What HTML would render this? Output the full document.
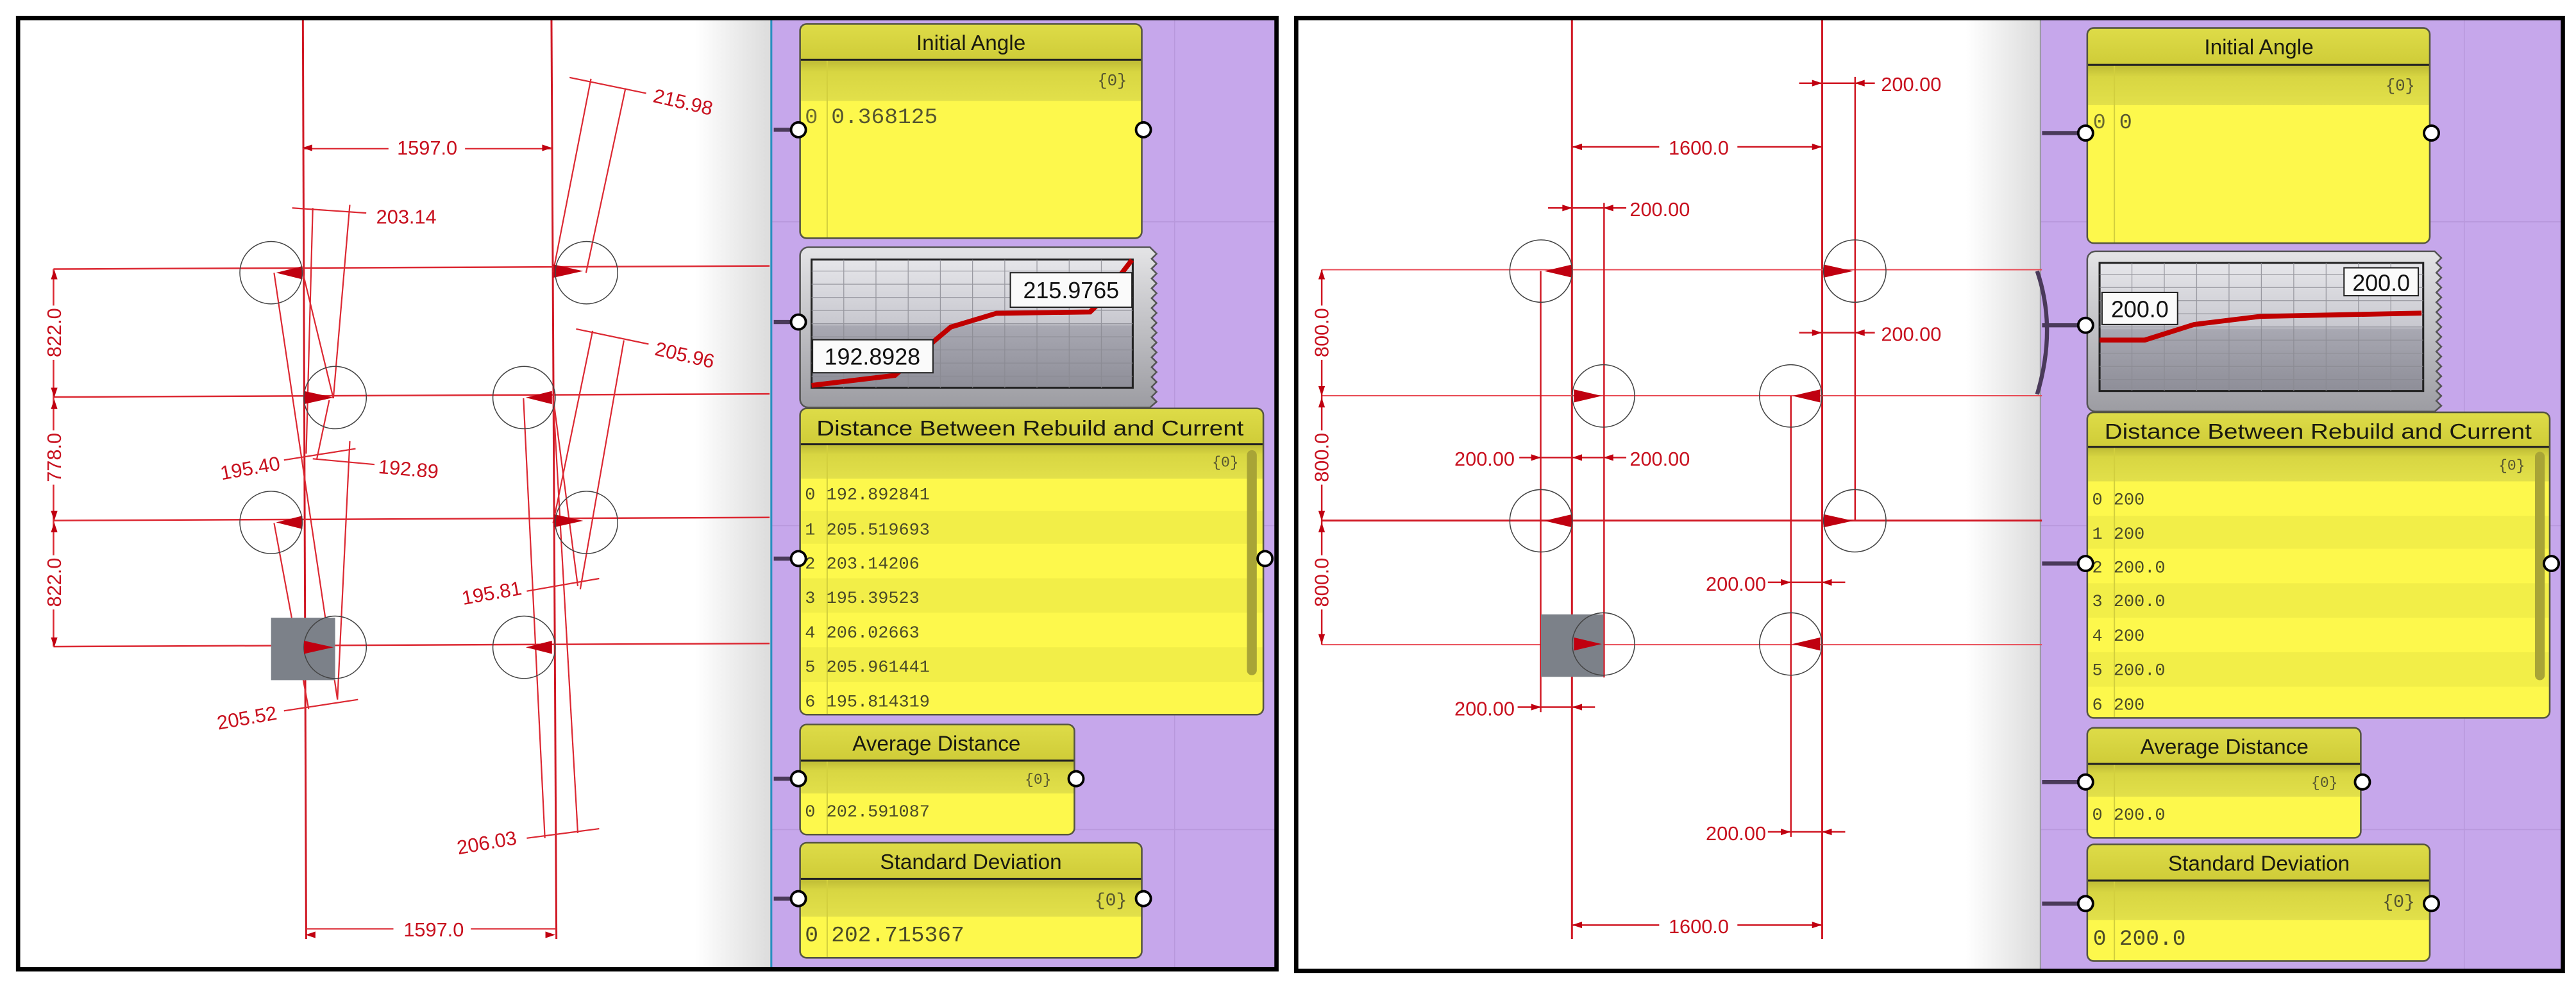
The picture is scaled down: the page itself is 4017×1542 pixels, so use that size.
<!DOCTYPE html>
<html><head><meta charset="utf-8"><style>
html,body{margin:0;padding:0;background:#fff;}
svg{display:block}
.t{font-family:"Liberation Sans",sans-serif;}
.m{font-family:"Liberation Mono",monospace;}
.d{font-family:"Liberation Sans",sans-serif;font-size:12px;fill:#c8101e;}
</style></head><body>
<svg width="4017" height="1542" viewBox="0 0 1568 602" preserveAspectRatio="none" xmlns="http://www.w3.org/2000/svg">
<defs>
<linearGradient id="cv" x1="0" x2="1" y1="0" y2="0">
<stop offset="0" stop-color="#ffffff"/><stop offset="0.9" stop-color="#ffffff"/><stop offset="1" stop-color="#dcdcdc"/>
</linearGradient>
<linearGradient id="gOut" x1="0" x2="0" y1="0" y2="1">
<stop offset="0" stop-color="#e4e4e6"/><stop offset="1" stop-color="#9c9ca2"/>
</linearGradient>
<linearGradient id="gIn" x1="0" x2="0" y1="0" y2="1">
<stop offset="0" stop-color="#e6e6ea"/><stop offset="0.5" stop-color="#c8c8cf"/><stop offset="0.52" stop-color="#a8a8b2"/><stop offset="1" stop-color="#8e8e98"/>
</linearGradient>
<linearGradient id="hdr" x1="0" x2="0" y1="0" y2="1">
<stop offset="0" stop-color="#dedc48"/><stop offset="1" stop-color="#cfcc38"/>
</linearGradient>
<linearGradient id="sub" x1="0" x2="0" y1="0" y2="1">
<stop offset="0" stop-color="#bcb934"/><stop offset="0.3" stop-color="#d8d642"/><stop offset="1" stop-color="#e2e04a"/>
</linearGradient>
</defs>

<rect x="0" y="0" width="1568" height="602" fill="#fff"/>

<!-- ============ LEFT PANEL ============ -->
<rect x="11" y="11" width="458" height="579" fill="url(#cv)"/>
<rect x="469" y="11" width="308" height="579" fill="#c6a7eb"/>
<g stroke="#b898dc" stroke-width="0.6">
<line x1="469" y1="135" x2="777" y2="135"/><line x1="469" y1="320" x2="777" y2="320"/><line x1="469" y1="505" x2="777" y2="505"/>
<line x1="715" y1="11" x2="715" y2="590"/>
</g>
<line x1="469.5" y1="11" x2="469.5" y2="590" stroke="#2a8fc0" stroke-width="1.2"/>

<g transform="scale(0.501 0.3836)" fill="none" stroke="#d01824">
<line x1="368" y1="30" x2="372" y2="1490" stroke-width="3" vector-effect="non-scaling-stroke"/>
<line x1="670" y1="30" x2="676" y2="1490" stroke-width="3" vector-effect="non-scaling-stroke"/>
<g stroke="#dc2832">
<line x1="65" y1="427" x2="935" y2="422" stroke-width="2.5" vector-effect="non-scaling-stroke"/>
<line x1="65" y1="630" x2="935" y2="625" stroke-width="2.5" vector-effect="non-scaling-stroke"/>
<line x1="65" y1="826" x2="935" y2="821" stroke-width="2.5" vector-effect="non-scaling-stroke"/>
<line x1="65" y1="1026" x2="935" y2="1021" stroke-width="2.5" vector-effect="non-scaling-stroke"/>
<line x1="65" y1="427" x2="65" y2="1026" stroke-width="2.5" vector-effect="non-scaling-stroke"/>
<line x1="333" y1="433" x2="410" y2="1110" stroke-width="2.2" vector-effect="non-scaling-stroke"/>
<line x1="368" y1="433" x2="405" y2="632" stroke-width="2.2" vector-effect="non-scaling-stroke"/>
<line x1="405" y1="632" x2="425" y2="325" stroke-width="2.2" vector-effect="non-scaling-stroke"/>
<line x1="333" y1="830" x2="375" y2="1125" stroke-width="2.2" vector-effect="non-scaling-stroke"/>
<line x1="425" y1="700" x2="410" y2="1110" stroke-width="2.2" vector-effect="non-scaling-stroke"/>
<line x1="380" y1="330" x2="372" y2="720" stroke-width="2.2" vector-effect="non-scaling-stroke"/>
<line x1="400" y1="635" x2="385" y2="728" stroke-width="2.2" vector-effect="non-scaling-stroke"/>
<line x1="355" y1="330" x2="445" y2="338" stroke-width="2.2" vector-effect="non-scaling-stroke"/>
<line x1="345" y1="730" x2="432" y2="712" stroke-width="2.2" vector-effect="non-scaling-stroke"/>
<line x1="380" y1="728" x2="455" y2="737" stroke-width="2.2" vector-effect="non-scaling-stroke"/>
<line x1="345" y1="1128" x2="435" y2="1110" stroke-width="2.2" vector-effect="non-scaling-stroke"/>
<line x1="672" y1="432" x2="718" y2="125" stroke-width="2.2" vector-effect="non-scaling-stroke"/>
<line x1="712" y1="433" x2="760" y2="140" stroke-width="2.2" vector-effect="non-scaling-stroke"/>
<line x1="692" y1="123" x2="785" y2="148" stroke-width="2.2" vector-effect="non-scaling-stroke"/>
<line x1="636" y1="632" x2="662" y2="1330" stroke-width="2.2" vector-effect="non-scaling-stroke"/>
<line x1="672" y1="630" x2="702" y2="1322" stroke-width="2.2" vector-effect="non-scaling-stroke"/>
<line x1="672" y1="830" x2="720" y2="525" stroke-width="2.2" vector-effect="non-scaling-stroke"/>
<line x1="705" y1="935" x2="758" y2="540" stroke-width="2.2" vector-effect="non-scaling-stroke"/>
<line x1="700" y1="522" x2="788" y2="546" stroke-width="2.2" vector-effect="non-scaling-stroke"/>
<line x1="672" y1="630" x2="702" y2="930" stroke-width="2.2" vector-effect="non-scaling-stroke"/>
<line x1="640" y1="938" x2="728" y2="918" stroke-width="2.2" vector-effect="non-scaling-stroke"/>
<line x1="640" y1="1330" x2="728" y2="1315" stroke-width="2.2" vector-effect="non-scaling-stroke"/>
<line x1="368" y1="236" x2="472" y2="236" stroke-width="2.2" vector-effect="non-scaling-stroke"/>
<line x1="565" y1="236" x2="670" y2="236" stroke-width="2.2" vector-effect="non-scaling-stroke"/>
<line x1="372" y1="1474" x2="478" y2="1474" stroke-width="2.2" vector-effect="non-scaling-stroke"/>
<line x1="572" y1="1474" x2="676" y2="1474" stroke-width="2.2" vector-effect="non-scaling-stroke"/>
</g>
</g>
<g fill="#c00010">
<path d="M184,90 l6,-2 v4z M336,90 l-6,-2 v4z M186,569 l6,-2 v4z M338,569 l-6,-2 v4z"/>
<path d="M33,164 l-2,6 h4z M33,242 l-2,-6 h4z M33,243 l-2,6 h4z M33,317 l-2,-6 h4z M33,318 l-2,6 h4z M33,394 l-2,-6 h4z"/>
<path d="M168,166 L184,162 L184,170z"/>
<path d="M203,242 L185,238 L185,246z"/>
<path d="M168,318 L184,314 L184,322z"/>
<path d="M355,165 L337,161 L337,169z"/>
<path d="M320,242 L336,238 L336,246z"/>
<path d="M355,317 L337,313 L337,321z"/>
<path d="M320,394 L336,390 L336,398z"/>
</g>
<rect x="165" y="376" width="39" height="38" fill="#7c8189"/>
<g fill="none" stroke="#444" stroke-width="0.6">
<circle cx="165" cy="166" r="19"/><circle cx="204" cy="242" r="19"/><circle cx="165" cy="318" r="19"/><circle cx="204" cy="394" r="19"/>
<circle cx="357" cy="166" r="19"/><circle cx="319" cy="242" r="19"/><circle cx="357" cy="318" r="19"/><circle cx="319" cy="394" r="19"/>
</g>
<path d="M203,394 L185,390 L185,398z" fill="#c00010"/>
<text class="d" x="260" y="94" text-anchor="middle">1597.0</text>
<text class="d" x="264" y="570" text-anchor="middle">1597.0</text>
<text class="d" x="229" y="136">203.14</text>
<text class="d" x="230" y="288" transform="rotate(5 230 288)">192.89</text>
<text class="d" x="397" y="62" transform="rotate(13 397 62)">215.98</text>
<text class="d" x="398" y="216" transform="rotate(13 398 216)">205.96</text>
<text class="d" x="153" y="289" text-anchor="middle" transform="rotate(-10 153 289)">195.40</text>
<text class="d" x="300" y="365" text-anchor="middle" transform="rotate(-10 300 365)">195.81</text>
<text class="d" x="151" y="441" text-anchor="middle" transform="rotate(-10 151 441)">205.52</text>
<text class="d" x="297" y="517" text-anchor="middle" transform="rotate(-10 297 517)">206.03</text>
<g>
<rect x="27" y="186" width="12" height="33" fill="#fff"/><text class="d" transform="translate(37 202.5) rotate(-90)" text-anchor="middle">822.0</text>
<rect x="27" y="262" width="12" height="33" fill="#fff"/><text class="d" transform="translate(37 278.5) rotate(-90)" text-anchor="middle">778.0</text>
<rect x="27" y="338" width="12" height="33" fill="#fff"/><text class="d" transform="translate(37 354.5) rotate(-90)" text-anchor="middle">822.0</text>
</g>

<g stroke="#4a3a5a" stroke-width="2.5">
<line x1="471" y1="79" x2="485" y2="79"/><line x1="471" y1="196" x2="485" y2="196"/>
<line x1="471" y1="340" x2="485" y2="340"/><line x1="471" y1="474" x2="485" y2="474"/><line x1="471" y1="547" x2="485" y2="547"/>
</g>

<g>
<rect x="487" y="14.6" width="208" height="130.4" rx="4" fill="#fdf84c"/>
<path d="M487,36.4 V18.6 a4,4 0 0 1 4,-4 H691 a4,4 0 0 1 4,4 V36.4z" fill="url(#hdr)"/>
<rect x="487" y="36.4" width="208" height="25" fill="url(#sub)"/>
<line x1="503.5" y1="36.4" x2="503.5" y2="145" stroke="#d2cf3e" stroke-width="0.8"/>
<line x1="487" y1="36.4" x2="695" y2="36.4" stroke="#222" stroke-width="1.2"/>
<rect x="487" y="14.6" width="208" height="130.4" rx="4" fill="none" stroke="#555540" stroke-width="1"/>
<text class="t" x="591" y="30.5" font-size="13" text-anchor="middle" fill="#1a1a10">Initial Angle</text>
<text class="m" x="686" y="52" font-size="10" text-anchor="end" fill="#555530">{0}</text>
<text class="m" x="490" y="75" font-size="13" fill="#6a6a30">0</text>
<text class="m" x="506" y="75" font-size="13.5" fill="#555530">0.368125</text>
<circle cx="486" cy="79" r="4.5" fill="#fff" stroke="#000" stroke-width="1.5"/>
<circle cx="696" cy="79" r="4.5" fill="#fff" stroke="#000" stroke-width="1.5"/>
</g>

<g>
<path d="M492,150.5 H700 l4,4 l-3,3 l3,3 l-3,3 l3,3 l-3,3 l3,3 l-3,3 l3,3 l-3,3 l3,3 l-3,3 l3,3 l-3,3 l3,3 l-3,3 l3,3 l-3,3 l3,3 l-3,3 l3,3 l-3,3 l3,3 l-3,3 l3,3 l-3,3 l3,3 l-3,3 l3,3 l-3,3 l3,3 l-4,3.5 H492 a5,5 0 0 1 -5,-5 V155.5 a5,5 0 0 1 5,-5z" fill="url(#gOut)" stroke="#555" stroke-width="1"/>
<rect x="494" y="158" width="195.5" height="78" fill="url(#gIn)" stroke="#222" stroke-width="1.2"/>
<g stroke="#8a8a92" stroke-width="0.5" opacity="0.8">
<line x1="513.6" y1="158" x2="513.6" y2="236"/><line x1="533.2" y1="158" x2="533.2" y2="236"/><line x1="552.8" y1="158" x2="552.8" y2="236"/><line x1="572.4" y1="158" x2="572.4" y2="236"/><line x1="592" y1="158" x2="592" y2="236"/><line x1="611.6" y1="158" x2="611.6" y2="236"/><line x1="631.2" y1="158" x2="631.2" y2="236"/><line x1="650.8" y1="158" x2="650.8" y2="236"/><line x1="670.4" y1="158" x2="670.4" y2="236"/>
<line x1="494" y1="165" x2="689.5" y2="165"/><line x1="494" y1="173" x2="689.5" y2="173"/><line x1="494" y1="181" x2="689.5" y2="181"/><line x1="494" y1="189" x2="689.5" y2="189"/><line x1="494" y1="197" x2="689.5" y2="197"/><line x1="494" y1="205" x2="689.5" y2="205"/><line x1="494" y1="213" x2="689.5" y2="213"/><line x1="494" y1="221" x2="689.5" y2="221"/><line x1="494" y1="229" x2="689.5" y2="229"/>
</g>
<polyline points="494,234.6 544.7,228.5 569.4,206.9 578.7,199.1 606.5,190.7 663.5,189.9 668.2,185.3 689,158.2" fill="none" stroke="#c00000" stroke-width="3"/>
<rect x="494.6" y="206.8" width="73.3" height="20.1" fill="#fafafa" stroke="#222" stroke-width="0.8"/>
<text class="t" x="531" y="222" font-size="14" text-anchor="middle" fill="#111">192.8928</text>
<rect x="615" y="166" width="74" height="21" fill="#fafafa" stroke="#222" stroke-width="0.8"/>
<text class="t" x="652" y="181.5" font-size="14" text-anchor="middle" fill="#111">215.9765</text>
<circle cx="486" cy="196" r="4.5" fill="#fff" stroke="#000" stroke-width="1.5"/>
</g>

<g>
<rect x="487" y="248.6" width="282" height="186.4" rx="4" fill="#fdf84c"/>
<path d="M487,270.4 V252.6 a4,4 0 0 1 4,-4 H765 a4,4 0 0 1 4,4 V270.4z" fill="url(#hdr)"/>
<rect x="487" y="270.4" width="282" height="21" fill="url(#sub)"/>
<g fill="#f2ee48"><rect x="487" y="311" width="282" height="20"/><rect x="487" y="352" width="282" height="21"/><rect x="487" y="394" width="282" height="21"/></g>
<line x1="503.5" y1="270.4" x2="503.5" y2="435" stroke="#d2cf3e" stroke-width="0.8"/>
<rect x="759" y="274" width="6" height="137" rx="3" fill="#a8a436"/>
<line x1="487" y1="270.4" x2="769" y2="270.4" stroke="#222" stroke-width="1.2"/>
<rect x="487" y="248.6" width="282" height="186.4" rx="4" fill="none" stroke="#555540" stroke-width="1"/>
<text class="t" x="627" y="265" font-size="13" text-anchor="middle" fill="#1a1a10" textLength="260" lengthAdjust="spacingAndGlyphs">Distance Between Rebuild and Current</text>
<text class="m" x="754" y="284" font-size="9" text-anchor="end" fill="#555530">{0}</text>
<g class="m" font-size="10.5" fill="#4a4a28">
<text x="490" y="304">0</text><text x="503" y="304">192.892841</text>
<text x="490" y="325.5">1</text><text x="503" y="325.5">205.519693</text>
<text x="490" y="346">2</text><text x="503" y="346">203.14206</text>
<text x="490" y="367">3</text><text x="503" y="367">195.39523</text>
<text x="490" y="388">4</text><text x="503" y="388">206.02663</text>
<text x="490" y="409">5</text><text x="503" y="409">205.961441</text>
<text x="490" y="430">6</text><text x="503" y="430">195.814319</text>
</g>
<circle cx="486" cy="340" r="4.5" fill="#fff" stroke="#000" stroke-width="1.5"/>
<circle cx="770" cy="340" r="4.5" fill="#fff" stroke="#000" stroke-width="1.5"/>
</g>

<g>
<rect x="487" y="441" width="167" height="67" rx="4" fill="#fdf84c"/>
<path d="M487,463 V445 a4,4 0 0 1 4,-4 H650 a4,4 0 0 1 4,4 V463z" fill="url(#hdr)"/>
<rect x="487" y="463" width="167" height="20" fill="url(#sub)"/>
<line x1="503.5" y1="463" x2="503.5" y2="508" stroke="#d2cf3e" stroke-width="0.8"/>
<line x1="487" y1="463" x2="654" y2="463" stroke="#222" stroke-width="1.2"/>
<rect x="487" y="441" width="167" height="67" rx="4" fill="none" stroke="#555540" stroke-width="1"/>
<text class="t" x="570" y="457" font-size="13" text-anchor="middle" fill="#1a1a10">Average Distance</text>
<text class="m" x="640" y="477" font-size="9" text-anchor="end" fill="#555530">{0}</text>
<text class="m" x="490" y="497" font-size="10.5" fill="#4a4a28">0</text>
<text class="m" x="503" y="497" font-size="10.5" fill="#4a4a28">202.591087</text>
<circle cx="486" cy="474" r="4.5" fill="#fff" stroke="#000" stroke-width="1.5"/>
<circle cx="655" cy="474" r="4.5" fill="#fff" stroke="#000" stroke-width="1.5"/>
</g>

<g>
<rect x="487" y="513" width="208" height="70" rx="4" fill="#fdf84c"/>
<path d="M487,535 V517 a4,4 0 0 1 4,-4 H691 a4,4 0 0 1 4,4 V535z" fill="url(#hdr)"/>
<rect x="487" y="535" width="208" height="23" fill="url(#sub)"/>
<line x1="503.5" y1="535" x2="503.5" y2="583" stroke="#d2cf3e" stroke-width="0.8"/>
<line x1="487" y1="535" x2="695" y2="535" stroke="#222" stroke-width="1.2"/>
<rect x="487" y="513" width="208" height="70" rx="4" fill="none" stroke="#555540" stroke-width="1"/>
<text class="t" x="591" y="529" font-size="13" text-anchor="middle" fill="#1a1a10">Standard Deviation</text>
<text class="m" x="686" y="551" font-size="11" text-anchor="end" fill="#555530">{0}</text>
<text class="m" x="490" y="573" font-size="13.5" fill="#4a4a28">0</text>
<text class="m" x="506" y="573" font-size="13.5" fill="#4a4a28">202.715367</text>
<circle cx="486" cy="547" r="4.5" fill="#fff" stroke="#000" stroke-width="1.5"/>
<circle cx="696" cy="547" r="4.5" fill="#fff" stroke="#000" stroke-width="1.5"/>
</g>

<rect x="11" y="11" width="766" height="579" fill="none" stroke="#000" stroke-width="2.6"/>

<!-- ============ RIGHT PANEL ============ -->
<rect x="789" y="11" width="453" height="580" fill="url(#cv)"/>
<rect x="1242" y="11" width="318" height="580" fill="#c6a7eb"/>
<g stroke="#b898dc" stroke-width="0.6">
<line x1="1242" y1="135" x2="1560" y2="135"/><line x1="1242" y1="320" x2="1560" y2="320"/><line x1="1242" y1="505" x2="1560" y2="505"/>
<line x1="1500" y1="11" x2="1500" y2="591"/>
</g>
<line x1="1242" y1="11" x2="1242" y2="591" stroke="#9a9aa2" stroke-width="0.8"/>

<g transform="translate(784.5 0) scale(0.501 0.3836)" fill="none">
<g stroke="#d01824">
<line x1="344" y1="30" x2="344" y2="1490" stroke-width="3" vector-effect="non-scaling-stroke"/>
<line x1="648" y1="30" x2="648" y2="1490" stroke-width="3" vector-effect="non-scaling-stroke"/>
<line x1="40" y1="826" x2="915" y2="826" stroke-width="3" vector-effect="non-scaling-stroke"/>
</g>
<g stroke="#e84a54">
<line x1="40" y1="428" x2="915" y2="428" stroke-width="2" vector-effect="non-scaling-stroke"/>
<line x1="40" y1="628" x2="915" y2="628" stroke-width="2" vector-effect="non-scaling-stroke"/>
<line x1="40" y1="1023" x2="915" y2="1023" stroke-width="2" vector-effect="non-scaling-stroke"/>
</g>
<g stroke="#d01824">
<line x1="40" y1="428" x2="40" y2="1023" stroke-width="2.5" vector-effect="non-scaling-stroke"/>
<line x1="306" y1="430" x2="306" y2="1130" stroke-width="2.5" vector-effect="non-scaling-stroke"/>
<line x1="383" y1="322" x2="383" y2="1075" stroke-width="2.5" vector-effect="non-scaling-stroke"/>
<line x1="688" y1="122" x2="688" y2="826" stroke-width="2.5" vector-effect="non-scaling-stroke"/>
<line x1="610" y1="628" x2="610" y2="1328" stroke-width="2.5" vector-effect="non-scaling-stroke"/>
<line x1="620" y1="132" x2="712" y2="132" stroke-width="2.5" vector-effect="non-scaling-stroke"/>
<line x1="620" y1="528" x2="712" y2="528" stroke-width="2.5" vector-effect="non-scaling-stroke"/>
<line x1="344" y1="233" x2="450" y2="233" stroke-width="2.5" vector-effect="non-scaling-stroke"/>
<line x1="545" y1="233" x2="648" y2="233" stroke-width="2.5" vector-effect="non-scaling-stroke"/>
<line x1="344" y1="1468" x2="450" y2="1468" stroke-width="2.5" vector-effect="non-scaling-stroke"/>
<line x1="545" y1="1468" x2="648" y2="1468" stroke-width="2.5" vector-effect="non-scaling-stroke"/>
<line x1="315" y1="330" x2="410" y2="330" stroke-width="2.5" vector-effect="non-scaling-stroke"/>
<line x1="280" y1="726" x2="410" y2="726" stroke-width="2.5" vector-effect="non-scaling-stroke"/>
<line x1="582" y1="924" x2="676" y2="924" stroke-width="2.5" vector-effect="non-scaling-stroke"/>
<line x1="278" y1="1122" x2="372" y2="1122" stroke-width="2.5" vector-effect="non-scaling-stroke"/>
<line x1="582" y1="1320" x2="676" y2="1320" stroke-width="2.5" vector-effect="non-scaling-stroke"/>
</g>
</g>
<g fill="#c00010">
<path d="M957,89.4 l6,-2 v4z M1109,89.4 l-6,-2 v4z M957,563 l6,-2 v4z M1109,563 l-6,-2 v4z"/>
<path d="M1109,50.6 l-6,-2 v4z M1129,50.6 l6,-2 v4z M1109,202.5 l-6,-2 v4z M1129,202.5 l6,-2 v4z"/>
<path d="M957,126.6 l-6,-2 v4z M976,126.6 l6,-2 v4z"/>
<path d="M938,278.5 l-6,-2 v4z M957,278.5 l6,-2 v4z M976,278.5 l6,-2 v4z"/>
<path d="M1090,354.5 l-6,-2 v4z M1109,354.5 l6,-2 v4z M1090,506.4 l-6,-2 v4z M1109,506.4 l6,-2 v4z"/>
<path d="M938,430.4 l-6,-2 v4z M957,430.4 l6,-2 v4z"/>
<path d="M804.5,164 l-2,6 h4z M804.5,241 l-2,-6 h4z M804.5,242 l-2,6 h4z M804.5,317 l-2,-6 h4z M804.5,318 l-2,6 h4z M804.5,392 l-2,-6 h4z"/>
</g>
<rect x="938" y="374" width="38" height="38" fill="#7c8189"/>
<g fill="#c00010">
<path d="M940,165 L957,161 L957,169z"/>
<path d="M975,241 L958,237 L958,245z"/>
<path d="M940,317 L957,313 L957,321z"/>
<path d="M975,392 L958,388 L958,396z"/>
<path d="M1128,165 L1110,161 L1110,169z"/>
<path d="M1091,241 L1108,237 L1108,245z"/>
<path d="M1128,317 L1110,313 L1110,321z"/>
<path d="M1091,392 L1108,388 L1108,396z"/>
</g>
<g fill="none" stroke="#444" stroke-width="0.6">
<circle cx="938" cy="165" r="19"/><circle cx="976" cy="241" r="19"/><circle cx="938" cy="317" r="19"/><circle cx="976" cy="392" r="19"/>
<circle cx="1129" cy="165" r="19"/><circle cx="1090" cy="241" r="19"/><circle cx="1129" cy="317" r="19"/><circle cx="1090" cy="392" r="19"/>
</g>
<text class="d" x="1145" y="55.5">200.00</text>
<text class="d" x="1034" y="94" text-anchor="middle">1600.0</text>
<text class="d" x="992" y="131.5">200.00</text>
<text class="d" x="1145" y="207.5">200.00</text>
<text class="d" x="922" y="283.5" text-anchor="end">200.00</text>
<text class="d" x="992" y="283.5">200.00</text>
<text class="d" x="1075" y="359.5" text-anchor="end">200.00</text>
<text class="d" x="922" y="435.5" text-anchor="end">200.00</text>
<text class="d" x="1075" y="511.5" text-anchor="end">200.00</text>
<text class="d" x="1034" y="568" text-anchor="middle">1600.0</text>
<g>
<rect x="798.5" y="186" width="12" height="33" fill="#fff"/><text class="d" transform="translate(808.5 202.5) rotate(-90)" text-anchor="middle">800.0</text>
<rect x="798.5" y="262" width="12" height="33" fill="#fff"/><text class="d" transform="translate(808.5 278.5) rotate(-90)" text-anchor="middle">800.0</text>
<rect x="798.5" y="338" width="12" height="33" fill="#fff"/><text class="d" transform="translate(808.5 354.5) rotate(-90)" text-anchor="middle">800.0</text>
</g>

<path d="M1240,165 Q1252,200 1240,240" fill="none" stroke="#4a3a5a" stroke-width="2.5"/>
<g stroke="#4a3a5a" stroke-width="2.5">
<line x1="1243" y1="81" x2="1268" y2="81"/><line x1="1243" y1="198" x2="1268" y2="198"/>
<line x1="1243" y1="343" x2="1268" y2="343"/><line x1="1243" y1="476" x2="1268" y2="476"/><line x1="1243" y1="550" x2="1268" y2="550"/>
</g>

<g>
<rect x="1270.5" y="17" width="208.5" height="131" rx="4" fill="#fdf84c"/>
<path d="M1270.5,39.5 V21 a4,4 0 0 1 4,-4 H1475 a4,4 0 0 1 4,4 V39.5z" fill="url(#hdr)"/>
<rect x="1270.5" y="39.5" width="208.5" height="24.5" fill="url(#sub)"/>
<line x1="1287" y1="39.5" x2="1287" y2="148" stroke="#d2cf3e" stroke-width="0.8"/>
<line x1="1270.5" y1="39.5" x2="1479" y2="39.5" stroke="#222" stroke-width="1.2"/>
<rect x="1270.5" y="17" width="208.5" height="131" rx="4" fill="none" stroke="#555540" stroke-width="1"/>
<text class="t" x="1375" y="33" font-size="13" text-anchor="middle" fill="#1a1a10">Initial Angle</text>
<text class="m" x="1470" y="55" font-size="10" text-anchor="end" fill="#555530">{0}</text>
<text class="m" x="1274" y="78" font-size="13" fill="#6a6a30">0</text>
<text class="m" x="1290" y="78" font-size="13" fill="#555530">0</text>
<circle cx="1269.5" cy="81" r="4.5" fill="#fff" stroke="#000" stroke-width="1.5"/>
<circle cx="1480" cy="81" r="4.5" fill="#fff" stroke="#000" stroke-width="1.5"/>
</g>

<g>
<path d="M1275.5,153 H1482 l4,4 l-3,3 l3,3 l-3,3 l3,3 l-3,3 l3,3 l-3,3 l3,3 l-3,3 l3,3 l-3,3 l3,3 l-3,3 l3,3 l-3,3 l3,3 l-3,3 l3,3 l-3,3 l3,3 l-3,3 l3,3 l-3,3 l3,3 l-3,3 l3,3 l-3,3 l3,3 l-3,3 l3,3 l-4,3.5 H1275.5 a5,5 0 0 1 -5,-5 V158 a5,5 0 0 1 5,-5z" fill="url(#gOut)" stroke="#555" stroke-width="1"/>
<rect x="1278" y="160" width="197" height="78" fill="url(#gIn)" stroke="#222" stroke-width="1.2"/>
<g stroke="#8a8a92" stroke-width="0.5" opacity="0.8">
<line x1="1297.7" y1="160" x2="1297.7" y2="238"/><line x1="1317.4" y1="160" x2="1317.4" y2="238"/><line x1="1337.1" y1="160" x2="1337.1" y2="238"/><line x1="1356.8" y1="160" x2="1356.8" y2="238"/><line x1="1376.5" y1="160" x2="1376.5" y2="238"/><line x1="1396.2" y1="160" x2="1396.2" y2="238"/><line x1="1415.9" y1="160" x2="1415.9" y2="238"/><line x1="1435.6" y1="160" x2="1435.6" y2="238"/><line x1="1455.3" y1="160" x2="1455.3" y2="238"/>
<line x1="1278" y1="167" x2="1475" y2="167"/><line x1="1278" y1="175" x2="1475" y2="175"/><line x1="1278" y1="183" x2="1475" y2="183"/><line x1="1278" y1="191" x2="1475" y2="191"/><line x1="1278" y1="199" x2="1475" y2="199"/><line x1="1278" y1="207" x2="1475" y2="207"/><line x1="1278" y1="215" x2="1475" y2="215"/><line x1="1278" y1="223" x2="1475" y2="223"/><line x1="1278" y1="231" x2="1475" y2="231"/>
</g>
<polyline points="1278,207 1305.5,207 1335.6,197.5 1375.7,192.6 1474,190.6" fill="none" stroke="#c00000" stroke-width="3"/>
<rect x="1279.5" y="178" width="46" height="19.5" fill="#fafafa" stroke="#222" stroke-width="0.8"/>
<text class="t" x="1302.5" y="193" font-size="14" text-anchor="middle" fill="#111">200.0</text>
<rect x="1426.8" y="163" width="45.2" height="17" fill="#fafafa" stroke="#222" stroke-width="0.8"/>
<text class="t" x="1449.4" y="177" font-size="14" text-anchor="middle" fill="#111">200.0</text>
<circle cx="1269.5" cy="198" r="4.5" fill="#fff" stroke="#000" stroke-width="1.5"/>
</g>

<g>
<rect x="1270.5" y="251" width="281.5" height="186" rx="4" fill="#fdf84c"/>
<path d="M1270.5,272 V255 a4,4 0 0 1 4,-4 H1548 a4,4 0 0 1 4,4 V272z" fill="url(#hdr)"/>
<rect x="1270.5" y="272" width="281.5" height="21" fill="url(#sub)"/>
<g fill="#f2ee48"><rect x="1270.5" y="314" width="281.5" height="20"/><rect x="1270.5" y="355" width="281.5" height="21"/><rect x="1270.5" y="397" width="281.5" height="21"/></g>
<line x1="1287" y1="272" x2="1287" y2="437" stroke="#d2cf3e" stroke-width="0.8"/>
<rect x="1543" y="275" width="6" height="139" rx="3" fill="#a8a436"/>
<line x1="1270.5" y1="272" x2="1552" y2="272" stroke="#222" stroke-width="1.2"/>
<rect x="1270.5" y="251" width="281.5" height="186" rx="4" fill="none" stroke="#555540" stroke-width="1"/>
<text class="t" x="1411" y="267" font-size="13" text-anchor="middle" fill="#1a1a10" textLength="260" lengthAdjust="spacingAndGlyphs">Distance Between Rebuild and Current</text>
<text class="m" x="1537" y="286" font-size="9" text-anchor="end" fill="#555530">{0}</text>
<g class="m" font-size="10.5" fill="#4a4a28">
<text x="1273.5" y="307">0</text><text x="1286.5" y="307">200</text>
<text x="1273.5" y="328">1</text><text x="1286.5" y="328">200</text>
<text x="1273.5" y="348.5">2</text><text x="1286.5" y="348.5">200.0</text>
<text x="1273.5" y="369">3</text><text x="1286.5" y="369">200.0</text>
<text x="1273.5" y="390">4</text><text x="1286.5" y="390">200</text>
<text x="1273.5" y="411">5</text><text x="1286.5" y="411">200.0</text>
<text x="1273.5" y="432">6</text><text x="1286.5" y="432">200</text>
</g>
<circle cx="1269.5" cy="343" r="4.5" fill="#fff" stroke="#000" stroke-width="1.5"/>
<circle cx="1553" cy="343" r="4.5" fill="#fff" stroke="#000" stroke-width="1.5"/>
</g>

<g>
<rect x="1270.5" y="443" width="166.5" height="67" rx="4" fill="#fdf84c"/>
<path d="M1270.5,465 V447 a4,4 0 0 1 4,-4 H1433 a4,4 0 0 1 4,4 V465z" fill="url(#hdr)"/>
<rect x="1270.5" y="465" width="166.5" height="20" fill="url(#sub)"/>
<line x1="1287" y1="465" x2="1287" y2="510" stroke="#d2cf3e" stroke-width="0.8"/>
<line x1="1270.5" y1="465" x2="1437" y2="465" stroke="#222" stroke-width="1.2"/>
<rect x="1270.5" y="443" width="166.5" height="67" rx="4" fill="none" stroke="#555540" stroke-width="1"/>
<text class="t" x="1354" y="459" font-size="13" text-anchor="middle" fill="#1a1a10">Average Distance</text>
<text class="m" x="1423" y="479" font-size="9" text-anchor="end" fill="#555530">{0}</text>
<text class="m" x="1273.5" y="499" font-size="10.5" fill="#4a4a28">0</text>
<text class="m" x="1286.5" y="499" font-size="10.5" fill="#4a4a28">200.0</text>
<circle cx="1269.5" cy="476" r="4.5" fill="#fff" stroke="#000" stroke-width="1.5"/>
<circle cx="1438" cy="476" r="4.5" fill="#fff" stroke="#000" stroke-width="1.5"/>
</g>

<g>
<rect x="1270.5" y="514" width="208.5" height="71" rx="4" fill="#fdf84c"/>
<path d="M1270.5,536 V518 a4,4 0 0 1 4,-4 H1475 a4,4 0 0 1 4,4 V536z" fill="url(#hdr)"/>
<rect x="1270.5" y="536" width="208.5" height="24" fill="url(#sub)"/>
<line x1="1287" y1="536" x2="1287" y2="585" stroke="#d2cf3e" stroke-width="0.8"/>
<line x1="1270.5" y1="536" x2="1479" y2="536" stroke="#222" stroke-width="1.2"/>
<rect x="1270.5" y="514" width="208.5" height="71" rx="4" fill="none" stroke="#555540" stroke-width="1"/>
<text class="t" x="1375" y="530" font-size="13" text-anchor="middle" fill="#1a1a10">Standard Deviation</text>
<text class="m" x="1470" y="552" font-size="11" text-anchor="end" fill="#555530">{0}</text>
<text class="m" x="1274" y="575" font-size="13.5" fill="#4a4a28">0</text>
<text class="m" x="1290" y="575" font-size="13.5" fill="#4a4a28">200.0</text>
<circle cx="1269.5" cy="550" r="4.5" fill="#fff" stroke="#000" stroke-width="1.5"/>
<circle cx="1480" cy="550" r="4.5" fill="#fff" stroke="#000" stroke-width="1.5"/>
</g>

<rect x="789" y="11" width="771" height="580" fill="none" stroke="#000" stroke-width="2.6"/>
</svg>
</body></html>
